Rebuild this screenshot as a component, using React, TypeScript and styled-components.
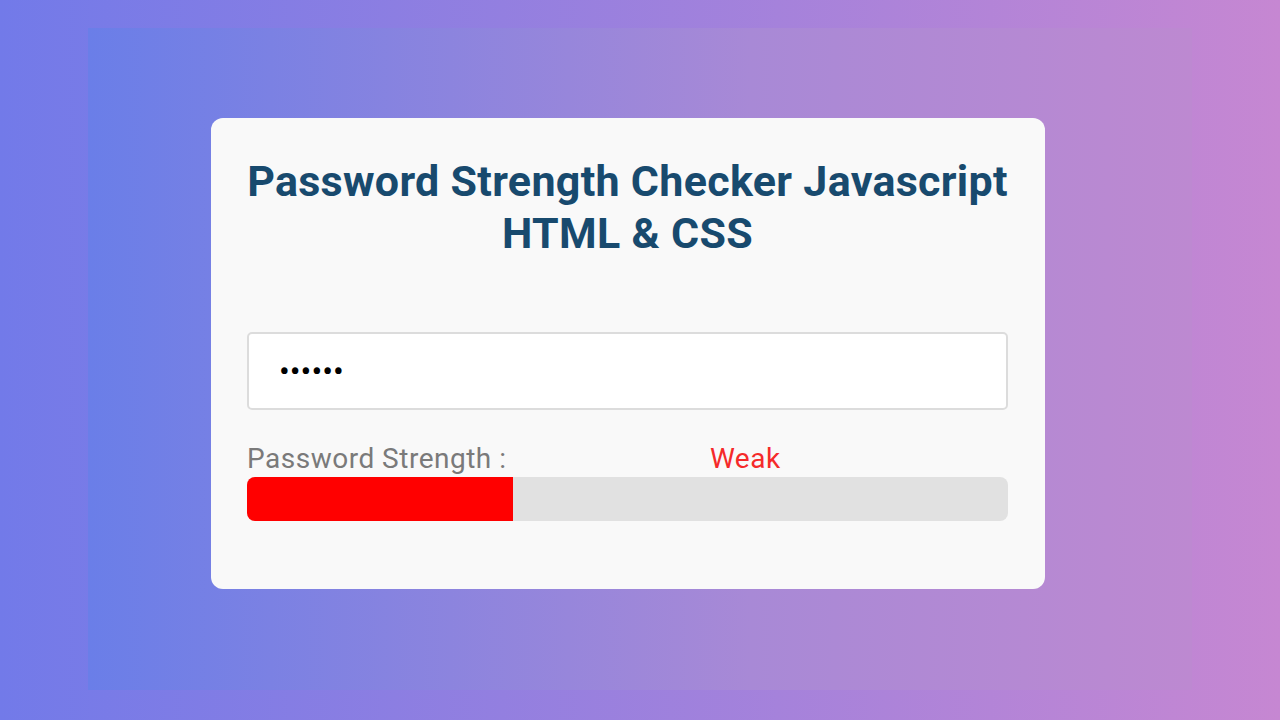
import * as React from "react";
import styled, { createGlobalStyle } from "styled-components";

const GlobalStyle = createGlobalStyle`
  html, body {
    margin: 0;
    padding: 0;
  }
  body {
    font-family: Roboto, "Liberation Sans", sans-serif;
    background: linear-gradient(to right, #727ae9, #c687d2);
  }
  * {
    box-sizing: border-box;
  }
`;

const levels = {
  weak: { label: "Weak", color: "#f52a2a", fill: "#ff0000", percent: 35 },
  medium: { label: "Medium", color: "#e0a000", fill: "#ffb300", percent: 65 },
  strong: { label: "Strong", color: "#1f9d3a", fill: "#22c03f", percent: 100 },
};

type Level = keyof typeof levels;

function checkStrength(value: string): Level {
  let score = 0;
  if (value.length >= 8) score++;
  if (/[A-Z]/.test(value) && /[a-z]/.test(value)) score++;
  if (/\d/.test(value) && /[^A-Za-z0-9]/.test(value)) score++;
  if (score >= 3) return "strong";
  if (score === 2) return "medium";
  return "weak";
}

export default function App() {
  const [password, setPassword] = React.useState("123456");
  const level = levels[checkStrength(password)];

  return (
    <>
      <GlobalStyle />
      <Page>
        <Frame>
          <Card>
            <Title>
              Password Strength Checker Javascript
              <br />
              HTML &amp; CSS
            </Title>
            <PasswordInput
              type="password"
              value={password}
              onChange={(e) => setPassword(e.target.value)}
            />
            <StatusRow>
              <StatusLabel>Password Strength :</StatusLabel>
              <StatusValue color={level.color}>{level.label}</StatusValue>
            </StatusRow>
            <Meter>
              <MeterFill color={level.fill} style={{ width: `${level.percent}%` }} />
            </Meter>
          </Card>
        </Frame>
      </Page>
    </>
  );
}

const Page = styled.div`
  width: 1280px;
  height: 720px;
  padding: 28px 88px 30px;
`;

const Frame = styled.div`
  height: 100%;
  display: flex;
  align-items: flex-start;
  padding: 90px 0 0 123px;
  background: linear-gradient(to right, #6a7ee8, #a889d6 60%, #bd89d1);
`;

const Card = styled.div`
  width: 834px;
  height: 471px;
  display: flex;
  flex-direction: column;
  padding: 37px 37px 0 36px;
  background: #f9f9f9;
  border-radius: 12px;
`;

const Title = styled.h1`
  margin: 0;
  font-size: 43px;
  line-height: 52px;
  letter-spacing: 0.3px;
  font-weight: 700;
  text-align: center;
  color: #184a6e;
`;

const PasswordInput = styled.input`
  margin-top: 73px;
  width: 100%;
  height: 78px;
  padding: 0 30px;
  font-family: Roboto, "Liberation Sans", sans-serif;
  font-size: 32px;
  color: #000;
  background: #fff;
  border: 2px solid #dcdcdc;
  border-radius: 5px;
  outline: none;
`;

const StatusRow = styled.div`
  margin-top: 34px;
  display: flex;
  height: 30px;
  line-height: 30px;
  font-size: 28px;
  letter-spacing: 0.5px;
`;

const StatusLabel = styled.span`
  color: #7a7a7a;
`;

const StatusValue = styled.span<{ color: string }>`
  flex: 1;
  text-align: center;
  padding-right: 24px;
  color: ${(p) => p.color};
`;

const Meter = styled.div`
  margin-top: 3px;
  height: 44px;
  background: #e1e1e1;
  border-radius: 8px;
  overflow: hidden;
`;

const MeterFill = styled.div<{ color: string }>`
  height: 100%;
  background: ${(p) => p.color};
`;
